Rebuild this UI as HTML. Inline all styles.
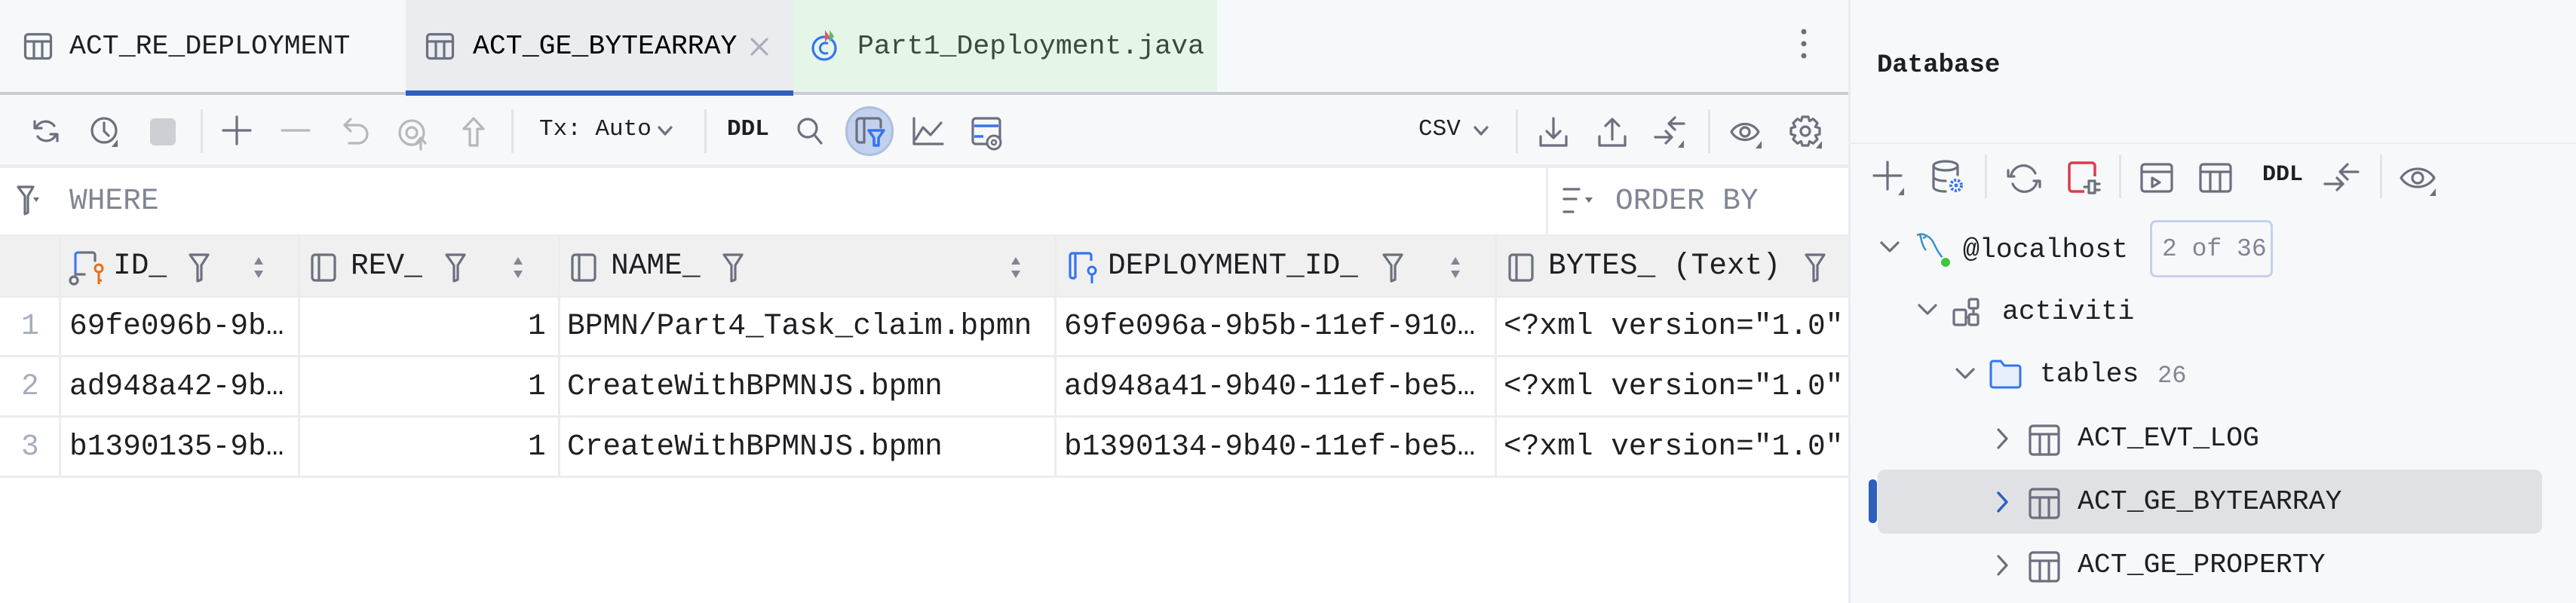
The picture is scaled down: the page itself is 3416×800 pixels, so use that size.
<!DOCTYPE html>
<html><head><meta charset="utf-8"><style>
*{margin:0;padding:0;box-sizing:border-box}
body{width:3416px;height:800px;overflow:hidden;background:#fff;font-family:"Liberation Mono",monospace;color:#1e1f22;position:relative}
.a{position:absolute;white-space:nowrap}
svg{position:absolute;overflow:visible}
.ic{fill:none;stroke:#6c707e;stroke-width:3.2;stroke-linecap:round;stroke-linejoin:round}
.dis{stroke:#b4b8bf}
.sep{position:absolute;width:3px;background:#e3e4e8}
.vl{position:absolute;width:3px;background:#ebecf0}
.hl{position:absolute;height:3px;background:#ebecf0}
.t40{font-size:39.5px;line-height:80px}
</style></head><body>
<div class="a" style="left:0;top:0;width:2453px;height:124px;background:#f7f8fa"></div>
<div class="a" style="left:538px;top:0;width:514px;height:124px;background:#ebecf0"></div>
<div class="a" style="left:1052px;top:0;width:562px;height:124px;background:#e5f5e8"></div>
<div class="a" style="left:0;top:122px;width:2453px;height:4px;background:#c9ccd3"></div>
<div class="a" style="left:538px;top:120px;width:514px;height:7px;background:#2e5fbd"></div>
<svg style="left:32px;top:44px" width="40" height="36"><rect class="ic" x="1.5" y="1.5" width="34" height="32" rx="4"/><path class="ic" d="M1.5 11h34M13 11v22M24 11v22"/></svg>
<div class="a" style="left:92px;top:36px;font-size:36.5px;line-height:52px;color:#1e1f22">ACT_RE_DEPLOYMENT</div>
<svg style="left:565px;top:44px" width="40" height="36"><rect class="ic" x="1.5" y="1.5" width="34" height="32" rx="4"/><path class="ic" d="M1.5 11h34M13 11v22M24 11v22"/></svg>
<div class="a" style="left:627px;top:36px;font-size:36.5px;line-height:52px;color:#000">ACT_GE_BYTEARRAY</div>
<svg style="left:995px;top:50px" width="24" height="24"><path class="ic" style="stroke:#a8adbd" d="M2 2l20 20M22 2L2 22"/></svg>
<svg style="left:1076px;top:38px" width="38" height="46"><circle class="ic" style="stroke:#3574f0" cx="17" cy="26" r="15"/><path style="fill:none;stroke:#3574f0;stroke-width:3" d="M22 20a7 7 0 1 0 0 12"/><path d="M18 2l6 8-6 8z" fill="#e55765"/><path d="M24 2l6 8-6 8z" fill="#5fb865"/></svg>
<div class="a" style="left:1137px;top:36px;font-size:36.5px;line-height:52px;color:#3b4a3c">Part1_Deployment.java</div>
<svg style="left:2387px;top:38px" width="10" height="44"><circle cx="5" cy="4" r="3.5" fill="#6c707e"/><circle cx="5" cy="20" r="3.5" fill="#6c707e"/><circle cx="5" cy="36" r="3.5" fill="#6c707e"/></svg>

<div class="a" style="left:0;top:127px;width:2453px;height:91px;background:#f7f8fa"></div>
<div class="a" style="left:0;top:218px;width:2453px;height:5px;background:#ebecf0"></div>
<svg style="left:44px;top:155px" width="34" height="38"><path class="ic" d="M28 12A14 14 0 0 0 4 14M6 26a14 14 0 0 0 24-2M2 6v9h9M32 32v-9h-9"/></svg>
<svg style="left:120px;top:153px" width="40" height="46"><circle class="ic" cx="18" cy="20" r="16"/><path class="ic" d="M18 10v11l6 6"/><path d="M28 42l8-10v10z" fill="#6c707e"/></svg>
<div class="a" style="left:199px;top:157px;width:34px;height:36px;border-radius:6px;background:#cdcfd4"></div>
<div class="sep" style="left:266px;top:145px;height:58px"></div>
<svg style="left:296px;top:155px" width="36" height="36"><path class="ic" d="M18 0v36M0 18h36"/></svg>
<svg style="left:374px;top:170px" width="36" height="6"><path class="ic dis" d="M0 3h36"/></svg>
<svg style="left:455px;top:156px" width="36" height="40"><path class="ic dis" d="M10 2L2 10l8 8M2 10h18a12 12 0 0 1 0 24H8"/></svg>
<svg style="left:528px;top:158px" width="44" height="42"><circle class="ic dis" cx="18" cy="18" r="16"/><circle class="ic dis" cx="18" cy="18" r="7"/><path class="ic dis" d="M30 40V26M24 32l6-7 6 7"/></svg>
<svg style="left:612px;top:155px" width="32" height="40"><path class="ic dis" d="M16 2L3 16h8v22h10V16h8z"/></svg>
<div class="sep" style="left:678px;top:145px;height:58px"></div>
<div class="a" style="left:715px;top:150px;font-size:31px;line-height:44px">Tx: Auto</div>
<svg style="left:873px;top:168px" width="18" height="12"><path class="ic" d="M1 1l8 9 8-9"/></svg>
<div class="sep" style="left:934px;top:145px;height:58px"></div>
<div class="a" style="left:964px;top:150px;font-size:31px;line-height:44px;font-weight:bold">DDL</div>
<svg style="left:1056px;top:155px" width="36" height="38"><circle class="ic" cx="15" cy="15" r="12"/><path class="ic" d="M24 24l9 11"/></svg>
<div class="a" style="left:1121px;top:141px;width:64px;height:66px;border-radius:32px;background:#c2d2ee;border:3px solid #aebde0"></div>
<svg style="left:1134px;top:155px" width="40" height="42"><path class="ic" d="M10 34H6a4 4 0 0 1-4-4V6a4 4 0 0 1 4-4h24a4 4 0 0 1 4 4v8M12 2v32"/><path style="fill:none;stroke:#3574f0;stroke-width:3.5;stroke-linejoin:round" d="M18 18h20l-7 10v10h-6V28z"/></svg>
<svg style="left:1210px;top:155px" width="42" height="38"><path class="ic" d="M2 2v34h38M4 30l10-16 10 10L38 8"/></svg>
<svg style="left:1288px;top:155px" width="42" height="44"><rect class="ic" x="2" y="2" width="36" height="34" rx="4"/><path style="stroke:#3574f0;stroke-width:3.5" d="M4 12h32M4 26h12"/><circle cx="30" cy="34" r="9" fill="#f7f8fa" stroke="#6c707e" stroke-width="3"/><circle cx="30" cy="34" r="3" fill="none" stroke="#6c707e" stroke-width="2.5"/></svg>
<div class="a" style="left:1881px;top:150px;font-size:31px;line-height:44px">CSV</div>
<svg style="left:1955px;top:168px" width="18" height="12"><path class="ic" d="M1 1l8 9 8-9"/></svg>
<div class="sep" style="left:2010px;top:145px;height:58px"></div>
<svg style="left:2041px;top:155px" width="38" height="40"><path class="ic" d="M19 2v26M10 19l9 9 9-9M2 26v12h34V26"/></svg>
<svg style="left:2119px;top:155px" width="38" height="40"><path class="ic" d="M19 30V4M10 12l9-9 9 9M2 26v12h34V26"/></svg>
<svg style="left:2193px;top:152px" width="44" height="46"><path class="ic" d="M20 12h20M28 4l-8 8 8 8M2 30h22M16 22l8 8-8 8"/><path d="M32 44l8-10v10z" fill="#6c707e"/></svg>
<div class="sep" style="left:2265px;top:145px;height:58px"></div>
<svg style="left:2294px;top:157px" width="44" height="42"><path class="ic" d="M2 18C10 4 30 4 38 18C30 32 10 32 2 18z"/><circle class="ic" cx="20" cy="18" r="6"/><path d="M34 40l8-10v10z" fill="#6c707e"/></svg>
<svg style="left:2374px;top:153px" width="44" height="46"><circle class="ic" cx="20" cy="21" r="6"/><path class="ic" d="M16 2h8l1.5 5.5 5-2.8 5.6 5.6-2.8 5 5.7 1.7v8l-5.7 1.7 2.8 5-5.6 5.6-5-2.8L24 40h-8l-1.5-5.5-5 2.8-5.6-5.6 2.8-5L1 25v-8l5.7-1.7-2.8-5 5.6-5.6 5 2.8z"/><path d="M34 44l8-10v10z" fill="#6c707e"/></svg>

<div class="a" style="left:0;top:223px;width:2453px;height:88px;background:#fff"></div>
<svg style="left:22px;top:246px" width="30" height="40"><path class="ic" d="M2 2h20l-7 12v22l-4 2V14z"/><path d="M22 16h8l-4 6z" fill="#6c707e"/></svg>
<div class="a" style="left:92px;top:243px;font-size:39.5px;line-height:48px;color:#818594">WHERE</div>
<div class="vl" style="left:2050px;top:223px;height:88px"></div>
<svg style="left:2072px;top:248px" width="46" height="36"><path class="ic" d="M2 3h20M2 16h16M2 33h12"/><path d="M30 14h10l-5 7z" fill="#6c707e"/></svg>
<div class="a" style="left:2142px;top:243px;font-size:39.5px;line-height:48px;color:#818594">ORDER BY</div>

<div class="a" style="left:0;top:311px;width:2453px;height:82px;background:#f0f0f0;border-top:2px solid #ebecf0"></div>
<div class="vl" style="left:78px;top:313px;height:320px"></div>
<div class="vl" style="left:395px;top:313px;height:320px"></div>
<div class="vl" style="left:740px;top:313px;height:320px"></div>
<div class="vl" style="left:1398px;top:313px;height:320px"></div>
<div class="vl" style="left:1982px;top:313px;height:320px"></div>
<div class="a" style="left:2451px;top:0;width:3px;height:800px;background:#ebecf0"></div>
<svg style="left:92px;top:334px" width="44" height="44"><path style="fill:none;stroke:#3574f0;stroke-width:3" d="M8 30V4a3 3 0 0 1 3-3h4"/><path class="ic" d="M15 1h16a3 3 0 0 1 3 3v8M8 30h12"/><circle class="ic" cx="6" cy="38" r="5"/><circle cx="39" cy="22" r="5" fill="none" stroke="#e66d17" stroke-width="3"/><path style="stroke:#e66d17;stroke-width:3" d="M39 27v16M39 38h4"/></svg>
<div class="a t40" style="left:150px;top:313px">ID_</div>
<svg style="left:250px;top:336px" width="30" height="38"><path class="ic" d="M2 2h24l-9 14v19l-5 2V16z"/></svg>
<svg style="left:336px;top:340px" width="14" height="30"><path d="M7 1l6 10H1zM7 29l6-10H1z" fill="#818594"/></svg>
<svg style="left:412px;top:336px" width="34" height="38"><rect class="ic" x="2" y="2" width="30" height="34" rx="4"/><path class="ic" d="M11 2v34"/></svg>
<div class="a t40" style="left:465px;top:313px">REV_</div>
<svg style="left:590px;top:336px" width="30" height="38"><path class="ic" d="M2 2h24l-9 14v19l-5 2V16z"/></svg>
<svg style="left:680px;top:340px" width="14" height="30"><path d="M7 1l6 10H1zM7 29l6-10H1z" fill="#818594"/></svg>
<svg style="left:757px;top:336px" width="34" height="38"><rect class="ic" x="2" y="2" width="30" height="34" rx="4"/><path class="ic" d="M11 2v34"/></svg>
<div class="a t40" style="left:810px;top:313px">NAME_</div>
<svg style="left:958px;top:336px" width="30" height="38"><path class="ic" d="M2 2h24l-9 14v19l-5 2V16z"/></svg>
<svg style="left:1340px;top:340px" width="14" height="30"><path d="M7 1l6 10H1zM7 29l6-10H1z" fill="#818594"/></svg>
<svg style="left:1416px;top:334px" width="40" height="44"><path style="fill:none;stroke:#3574f0;stroke-width:3.2" d="M10 35H6a3 3 0 0 1-3-3V5a3 3 0 0 1 3-3h4v33M10 2h18a3 3 0 0 1 3 3v7"/><circle cx="32" cy="25" r="5" fill="none" stroke="#3574f0" stroke-width="3"/><path style="stroke:#3574f0;stroke-width:3" d="M32 30v12"/></svg>
<div class="a t40" style="left:1469px;top:313px">DEPLOYMENT_ID_</div>
<svg style="left:1833px;top:336px" width="30" height="38"><path class="ic" d="M2 2h24l-9 14v19l-5 2V16z"/></svg>
<svg style="left:1923px;top:340px" width="14" height="30"><path d="M7 1l6 10H1zM7 29l6-10H1z" fill="#818594"/></svg>
<svg style="left:2000px;top:336px" width="34" height="38"><rect class="ic" x="2" y="2" width="30" height="34" rx="4"/><path class="ic" d="M11 2v34"/></svg>
<div class="a t40" style="left:2053px;top:313px">BYTES_ (Text)</div>
<svg style="left:2393px;top:336px" width="30" height="38"><path class="ic" d="M2 2h24l-9 14v19l-5 2V16z"/></svg>

<div class="hl" style="left:0;top:392px;width:2453px"></div>
<div class="hl" style="left:0;top:471px;width:2453px"></div>
<div class="hl" style="left:0;top:551px;width:2453px"></div>
<div class="hl" style="left:0;top:631px;width:2453px"></div>

<div class="a t40" style="left:28px;top:393px;color:#a8adbd">1</div>
<div class="a t40" style="left:28px;top:473px;color:#a8adbd">2</div>
<div class="a t40" style="left:28px;top:553px;color:#a8adbd">3</div>
<div class="a t40" style="left:92px;top:393px">69fe096b-9b…</div>
<div class="a t40" style="left:92px;top:473px">ad948a42-9b…</div>
<div class="a t40" style="left:92px;top:553px">b1390135-9b…</div>
<div class="a t40" style="left:700px;top:393px">1</div>
<div class="a t40" style="left:700px;top:473px">1</div>
<div class="a t40" style="left:700px;top:553px">1</div>
<div class="a t40" style="left:752px;top:393px">BPMN/Part4_Task_claim.bpmn</div>
<div class="a t40" style="left:752px;top:473px">CreateWithBPMNJS.bpmn</div>
<div class="a t40" style="left:752px;top:553px">CreateWithBPMNJS.bpmn</div>
<div class="a t40" style="left:1411px;top:393px">69fe096a-9b5b-11ef-910…</div>
<div class="a t40" style="left:1411px;top:473px">ad948a41-9b40-11ef-be5…</div>
<div class="a t40" style="left:1411px;top:553px">b1390134-9b40-11ef-be5…</div>
<div class="a t40" style="left:1994px;top:393px">&lt;?xml version="1.0"</div>
<div class="a t40" style="left:1994px;top:473px">&lt;?xml version="1.0"</div>
<div class="a t40" style="left:1994px;top:553px">&lt;?xml version="1.0"</div>

<div class="a" style="left:2454px;top:0;width:962px;height:800px;background:#f7f8fa"></div>
<div class="a" style="left:2454px;top:189px;width:962px;height:2px;background:#ebecf0"></div>
<div class="a" style="left:2489px;top:62px;font-family:'Liberation Mono',monospace;font-weight:bold;font-size:34px;line-height:50px;color:#1e1f22">Database</div>
<svg style="left:2483px;top:213px" width="48" height="48"><path class="ic" d="M2 20h36M20 2v36"/><path d="M34 46l8-10v10z" fill="#6c707e"/></svg>
<svg style="left:2562px;top:212px" width="46" height="46"><ellipse class="ic" cx="18" cy="8" rx="16" ry="6"/><path class="ic" d="M2 8v28c0 4 8 6 16 6M34 8v12M2 22c0 4 8 6 16 6"/><circle cx="32" cy="34" r="7" fill="none" stroke="#3574f0" stroke-width="4" stroke-dasharray="3 2"/><circle cx="32" cy="34" r="2.5" fill="#3574f0"/></svg>
<div class="sep" style="left:2632px;top:205px;height:58px"></div>
<svg style="left:2661px;top:218px" width="46" height="38"><path class="ic" d="M38 12A17 17 0 0 0 6 14M8 26a17 17 0 0 0 32-2M2 8v8h8M44 30v-8h-8"/></svg>
<svg style="left:2742px;top:214px" width="46" height="46"><path style="fill:none;stroke:#db3b4b;stroke-width:3.5" d="M22 40H6a4 4 0 0 1-4-4V6a4 4 0 0 1 4-4h26a4 4 0 0 1 4 4v14"/><path class="ic" d="M28 26h8v16h-8zM36 30h6M36 38h6M22 34h6"/></svg>
<div class="sep" style="left:2810px;top:205px;height:58px"></div>
<svg style="left:2838px;top:216px" width="44" height="40"><rect class="ic" x="2" y="2" width="40" height="36" rx="4"/><path class="ic" d="M2 12h40M16 20v12l10-6z"/></svg>
<svg style="left:2916px;top:216px" width="44" height="40"><rect class="ic" x="2" y="2" width="40" height="36" rx="4"/><path class="ic" d="M2 12h40M15 12v26M28 12v26"/></svg>
<div class="a" style="left:3000px;top:210px;font-size:30px;line-height:44px;font-weight:bold">DDL</div>
<svg style="left:3081px;top:214px" width="50" height="44"><path class="ic" d="M22 14h24M32 4l-10 10 10 10M2 30h24M18 22l8 8-8 8"/></svg>
<div class="sep" style="left:3156px;top:205px;height:58px"></div>
<svg style="left:3182px;top:218px" width="52" height="44"><path class="ic" d="M2 18C12 2 36 2 46 18C36 34 12 34 2 18z"/><circle class="ic" cx="24" cy="18" r="7"/><path d="M40 42l8-10v10z" fill="#6c707e"/></svg>

<svg style="left:2493px;top:320px" width="26" height="16"><path class="ic" d="M2 2l11 11 11-11"/></svg>
<svg style="left:2540px;top:306px" width="50" height="52"><path style="fill:none;stroke:#3d8fc9;stroke-width:2.5;stroke-linejoin:round" d="M2 6c8-4 18 2 22 10 4 8 6 14 16 24M6 4c2 10 4 18 8 22M10 10l4-2"/><circle cx="40" cy="42" r="7" fill="#3cc93c" stroke="#fff" stroke-width="2"/></svg>
<div class="a" style="left:2603px;top:307px;font-size:36.5px;line-height:50px">@localhost</div>
<div class="a" style="left:2851px;top:292px;width:163px;height:76px;border:3px solid #c4d1ea;border-radius:8px;background:#f7f8fa"></div>
<div class="a" style="left:2867px;top:306px;font-size:33px;line-height:50px;color:#818594">2 of 36</div>

<svg style="left:2543px;top:403px" width="26" height="16"><path class="ic" d="M2 2l11 11 11-11"/></svg>
<svg style="left:2589px;top:395px" width="44" height="38"><rect class="ic" x="2" y="16" width="16" height="20" rx="2"/><rect class="ic" x="22" y="2" width="12" height="12" rx="2"/><rect class="ic" x="22" y="22" width="12" height="14" rx="2"/><path class="ic" d="M18 26h4M28 14v8"/></svg>
<div class="a" style="left:2655px;top:389px;font-size:36.5px;line-height:50px">activiti</div>

<svg style="left:2593px;top:488px" width="26" height="16"><path class="ic" d="M2 2l11 11 11-11"/></svg>
<svg style="left:2638px;top:478px" width="44" height="38"><path style="fill:#e7effd;stroke:#3574f0;stroke-width:3;stroke-linejoin:round" d="M2 4a3 3 0 0 1 3-3h10l5 6h18a3 3 0 0 1 3 3v23a3 3 0 0 1-3 3H5a3 3 0 0 1-3-3z"/></svg>
<div class="a" style="left:2705px;top:472px;font-size:36.5px;line-height:50px">tables</div>
<div class="a" style="left:2861px;top:474px;font-size:32px;line-height:50px;color:#818594">26</div>

<svg style="left:2648px;top:568px" width="16" height="28"><path class="ic" d="M2 2l11 12-11 12"/></svg>
<svg style="left:2690px;top:563px" width="44" height="42"><rect class="ic" x="2" y="2" width="38" height="38" rx="4"/><path class="ic" d="M2 13h38M15 13v27M27 13v27"/></svg>
<div class="a" style="left:2755px;top:557px;font-size:36.5px;line-height:50px">ACT_EVT_LOG</div>

<div class="a" style="left:2490px;top:623px;width:881px;height:85px;border-radius:10px;background:#dfe1e5"></div>
<div class="a" style="left:2478px;top:636px;width:11px;height:58px;border-radius:5px;background:#2e5fbd"></div>
<svg style="left:2648px;top:652px" width="16" height="28"><path style="fill:none;stroke:#2e5fbd;stroke-width:3.5;stroke-linecap:round;stroke-linejoin:round" d="M2 2l11 12-11 12"/></svg>
<svg style="left:2690px;top:647px" width="44" height="42"><rect class="ic" x="2" y="2" width="38" height="38" rx="4"/><path class="ic" d="M2 13h38M15 13v27M27 13v27"/></svg>
<div class="a" style="left:2755px;top:641px;font-size:36.5px;line-height:50px">ACT_GE_BYTEARRAY</div>

<svg style="left:2648px;top:736px" width="16" height="28"><path class="ic" d="M2 2l11 12-11 12"/></svg>
<svg style="left:2690px;top:731px" width="44" height="42"><rect class="ic" x="2" y="2" width="38" height="38" rx="4"/><path class="ic" d="M2 13h38M15 13v27M27 13v27"/></svg>
<div class="a" style="left:2755px;top:725px;font-size:36.5px;line-height:50px">ACT_GE_PROPERTY</div>
</body></html>
